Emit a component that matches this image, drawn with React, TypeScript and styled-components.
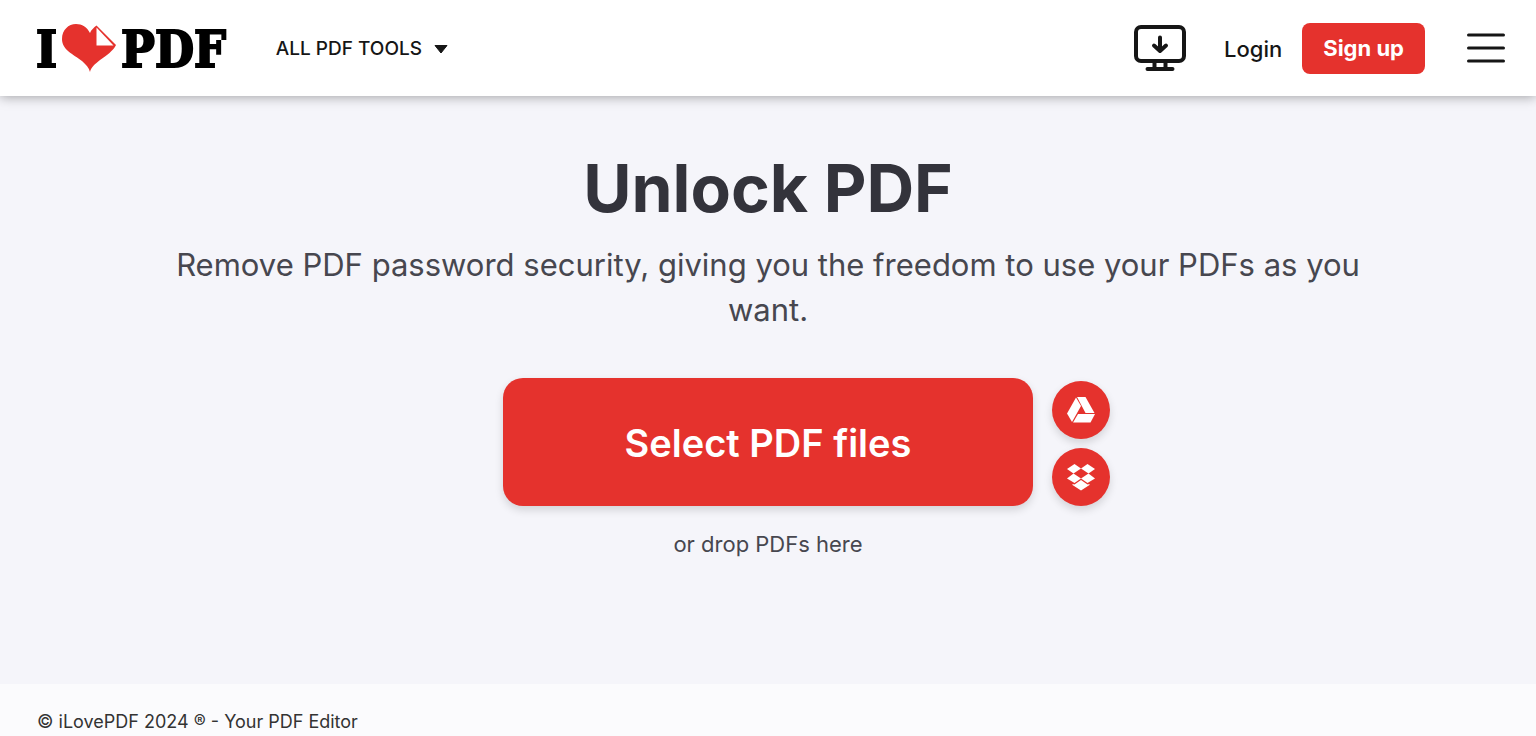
import React from "react";
import styled, { createGlobalStyle } from "styled-components";

const GlobalStyle = createGlobalStyle`
  *, *::before, *::after { box-sizing: border-box; }
  body {
    margin: 0;
    background: #f5f5fa;
    color: #161616;
    font-family: Inter, "Liberation Sans", sans-serif;
  }
  button { font-family: inherit; border: 0; padding: 0; cursor: pointer; }
  a { color: inherit; text-decoration: none; }
`;

const Page = styled.div`
  display: flex;
  flex-direction: column;
  min-height: 100vh;
`;

const Header = styled.header`
  position: relative;
  display: flex;
  align-items: center;
  height: 96px;
  padding: 0 30px 0 36px;
  background: #fff;
  box-shadow: 0 0 12px rgba(0, 0, 0, 0.4);
`;

const Logo = styled.a`
  display: flex;
  align-items: center;
  gap: 5px;
  color: #000;
`;

const LogoText = styled.span`
  padding-top: 4px;
  font-family: "DejaVu Serif Condensed", "DejaVu Serif", serif;
  font-size: 50px;
  font-weight: 700;
  line-height: 60px;
  -webkit-text-stroke: 2px #000;
`;

const ToolsButton = styled.button`
  display: flex;
  align-items: center;
  gap: 12px;
  margin-left: 50px;
  padding-top: 2px;
  background: none;
  color: #161616;
  font-size: 19px;
  font-weight: 500;
  line-height: 24px;
`;

const Account = styled.nav`
  display: flex;
  align-items: center;
  margin-left: auto;
`;

const IconLink = styled.a`
  display: flex;
  margin-right: 38px;
`;

const LoginLink = styled.a`
  margin-right: 20px;
  padding-top: 2px;
  font-size: 22px;
  font-weight: 500;
  line-height: 32px;
`;

const SignUpLink = styled.a`
  padding: 10px 21px;
  border-radius: 8px;
  background: #e5322d;
  color: #fff;
  font-size: 22px;
  font-weight: 700;
  line-height: 31px;
`;

const MenuButton = styled.button`
  display: flex;
  margin-left: 41px;
  background: none;
`;

const Hero = styled.main`
  flex: 1;
  padding: 52px 160px 0;
  text-align: center;
`;

const Title = styled.h1`
  margin: 0;
  color: #33333b;
  font-size: 66px;
  font-weight: 700;
  line-height: 80px;
`;

const Subtitle = styled.p`
  max-width: 1216px;
  margin: 14px auto 46px;
  color: #47474f;
  font-size: 31px;
  font-weight: 400;
  line-height: 45px;
`;

const Uploader = styled.div`
  display: grid;
  grid-template-columns: 1fr auto 1fr;
  align-items: end;
  column-gap: 19px;
`;

const SelectButton = styled.button`
  grid-column: 2;
  width: 530px;
  padding: 41px 48px 39px;
  border-radius: 20px;
  background: #e5322d;
  box-shadow: 0 4px 8px rgba(0, 0, 0, 0.14);
  color: #fff;
  font-size: 38px;
  font-weight: 600;
  line-height: 48px;
`;

const Sources = styled.div`
  display: flex;
  flex-direction: column;
  gap: 9px;
`;

const SourceButton = styled.button`
  display: flex;
  align-items: center;
  justify-content: center;
  width: 58px;
  height: 58px;
  border-radius: 50%;
  background: #e5322d;
  box-shadow: 0 4px 8px rgba(0, 0, 0, 0.14);
`;

const DropHint = styled.p`
  margin: 22px 0;
  color: #47474f;
  font-size: 22px;
  line-height: 32px;
`;

const Footer = styled.footer`
  padding: 26px 37px 2px;
  background: #fbfbfd;
  color: #333;
  font-size: 18px;
  line-height: 24px;
`;

function HeartIcon() {
  return (
    <svg width="54" height="48" viewBox="0 0 54 48" aria-hidden="true">
      <path
        fill="#e5322d"
        d="M28 48C27 44 24 40.500 20 37C11 30 0 26 0 15C0 6 6.500 0 14 0C20 0 25 3 28 9C29 6 32 3.500 34.500 1.500L54 21C51 27 45 31 38 36C33 40 29 43.500 28 48Z"
      />
      <path fill="#fff" d="M34.500 3.500V21.500H51.500Z" />
    </svg>
  );
}

function DesktopIcon() {
  return (
    <svg
      width="52"
      height="46"
      viewBox="0 0 52 46"
      fill="none"
      stroke="#161616"
      strokeWidth="4"
      strokeLinecap="round"
      strokeLinejoin="round"
      aria-hidden="true"
    >
      <rect x="2" y="2" width="48" height="34" rx="5" />
      <path d="M26 12.500V26M20 20.500L26 26L32 20.500M20.500 37V43M31.500 37V43M13.500 44H38.500" />
    </svg>
  );
}

function DriveIcon() {
  return (
    <svg width="30" height="26" viewBox="0 0 30 26" fill="#fff" aria-hidden="true">
      <path d="M10 0.500L15 9L6 25L1 16.500Z" />
      <path d="M11 0H19.500L28.500 16H19.500Z" />
      <path d="M12 17H29L24.500 25.500H7Z" />
    </svg>
  );
}

function DropboxIcon() {
  return (
    <svg width="30" height="28" viewBox="0 0 30 28" fill="#fff" aria-hidden="true">
      <path d="M8.500 1L15 5.500L7.500 10.500L1 6Z" />
      <path d="M21.500 1L29 6L22.500 10.500L15 5.500Z" />
      <path d="M7.500 10.500L15 15.500L8.500 20L1 15.500Z" />
      <path d="M22.500 10.500L29 15.500L21.500 20L15 15.500Z" />
      <path d="M6.500 21L8.500 21.500L15 17L21.500 21.500L23.500 21V22L15 27.500L6.500 22Z" />
    </svg>
  );
}

export default function App() {
  return (
    <Page>
      <GlobalStyle />
      <Header>
        <Logo href="#" aria-label="I love PDF">
          <LogoText>I</LogoText>
          <HeartIcon />
          <LogoText>PDF</LogoText>
        </Logo>
        <ToolsButton type="button">
          ALL PDF TOOLS
          <svg width="14" height="9" viewBox="0 0 14 9" aria-hidden="true">
            <path d="M1 0.500H13L7 8Z" fill="#161616" stroke="#161616" strokeLinejoin="round" />
          </svg>
        </ToolsButton>
        <Account>
          <IconLink href="#" aria-label="Desktop app">
            <DesktopIcon />
          </IconLink>
          <LoginLink href="#">Login</LoginLink>
          <SignUpLink href="#">Sign up</SignUpLink>
          <MenuButton type="button" aria-label="Menu">
            <svg width="40" height="32" viewBox="0 0 40 32" aria-hidden="true">
              <path d="M2.500 3H37.500M2.500 16H37.500M2.500 29H37.500" stroke="#161616" strokeWidth="3" strokeLinecap="round" />
            </svg>
          </MenuButton>
        </Account>
      </Header>
      <Hero>
        <Title>Unlock PDF</Title>
        <Subtitle>
          Remove PDF password security, giving you the freedom to use your PDFs as you want.
        </Subtitle>
        <Uploader>
          <SelectButton type="button">Select PDF files</SelectButton>
          <Sources>
            <SourceButton type="button" aria-label="Select from Google Drive">
              <DriveIcon />
            </SourceButton>
            <SourceButton type="button" aria-label="Select from Dropbox">
              <DropboxIcon />
            </SourceButton>
          </Sources>
        </Uploader>
        <DropHint>or drop PDFs here</DropHint>
      </Hero>
      <Footer>© iLovePDF 2024 ® - Your PDF Editor</Footer>
    </Page>
  );
}
